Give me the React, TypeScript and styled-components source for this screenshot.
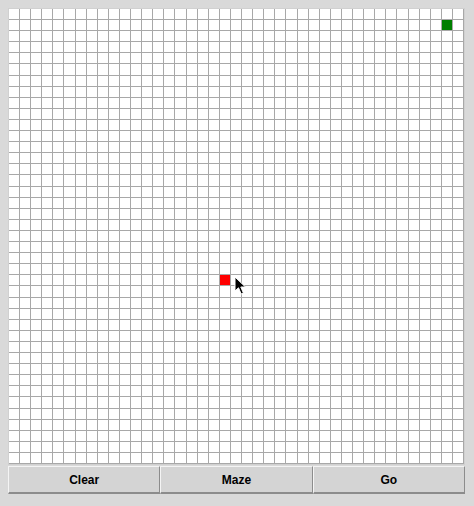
import { createGlobalStyle } from "styled-components";
import styled from "styled-components";

const COLS = 41;
const ROWS = 41;

// cells that are painted on the board
const start = { row: 24, col: 19 };
const goal = { row: 1, col: 39 };

const GlobalStyle = createGlobalStyle`
  html, body {
    margin: 0;
    padding: 0;
    background: #d9d9d9;
  }
  body {
    font-family: "Liberation Sans", Arial, sans-serif;
  }
`;

export default function App() {
  const cells = [];
  for (let r = 0; r < ROWS; r++) {
    for (let c = 0; c < COLS; c++) {
      let kind: "empty" | "start" | "goal" = "empty";
      if (r === start.row && c === start.col) kind = "start";
      if (r === goal.row && c === goal.col) kind = "goal";
      cells.push(<Cell key={r + "-" + c} $kind={kind} />);
    }
  }

  return (
    <Window>
      <GlobalStyle />
      <Board>
        <Grid>{cells}</Grid>
        <Pointer width="13" height="20" viewBox="0 0 13 20">
          <path
            d="M1 1 L1 15 L4.5 11.8 L7.2 18 L9.4 17 L6.8 11 L11.5 11 Z"
            fill="#000"
            stroke="#fff"
            strokeWidth="1"
            strokeLinejoin="miter"
          />
        </Pointer>
      </Board>
      <Toolbar>
        <Button>Clear</Button>
        <Button>Maze</Button>
        <Button>Go</Button>
      </Toolbar>
    </Window>
  );
}

const Window = styled.div`
  width: 474px;
  height: 506px;
  box-sizing: border-box;
  padding: 8px 9px 0 8px;
  background: #d9d9d9;
  display: flex;
  flex-direction: column;
`;

const Board = styled.div`
  position: relative;
  width: 457px;
  height: 457px;
  box-sizing: border-box;
  border: 1px solid #d0d0d0;
  background: #ffffff;
`;

const Grid = styled.div`
  width: 455px;
  height: 455px;
  display: grid;
  grid-template-columns: repeat(${COLS}, 1fr);
  grid-template-rows: repeat(${ROWS}, 1fr);
`;

const Cell = styled.div<{ $kind: "empty" | "start" | "goal" }>`
  box-sizing: border-box;
  border-right: 1px solid #a8a8a8;
  border-bottom: 1px solid #a8a8a8;
  background: ${(p) =>
    p.$kind === "start" ? "#ff0000" : p.$kind === "goal" ? "#007f00" : "#ffffff"};
`;

const Pointer = styled.svg`
  position: absolute;
  left: 225px;
  top: 267px;
`;

const Toolbar = styled.div`
  display: grid;
  grid-template-columns: repeat(3, 1fr);
  width: 457px;
  height: 28px;
  margin-top: 1px;
`;

const Button = styled.button`
  box-sizing: border-box;
  margin: 0;
  padding: 0;
  height: 28px;
  background: #d4d4d4;
  border-style: solid;
  border-width: 1px 1px 2px 1px;
  border-color: #f4f4f4 #8c8c8c #8c8c8c #f4f4f4;
  border-radius: 0;
  font-family: "Liberation Sans", Arial, sans-serif;
  font-weight: bold;
  font-size: 12px;
  color: #000;
  display: flex;
  align-items: center;
  justify-content: center;
`;
